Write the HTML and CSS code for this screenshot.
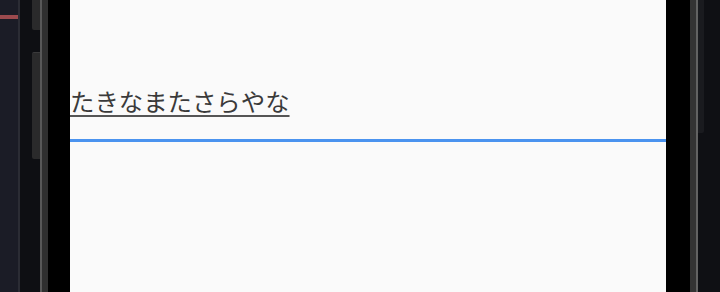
FILE: index.html
```html
<!DOCTYPE html>
<html lang="ja">
<head>
<meta charset="utf-8">
<link rel="stylesheet" href="styles.css">
</head>
<body>
<div class="screen">
  <div class="left">
    <div class="side-panel"><div class="red-mark"></div></div>
    <div class="side-divider"></div>
    <div class="side-gap"></div>
    <div class="scroll-track">
      <div class="scroll-block block-a"></div>
      <div class="scroll-block block-b"></div>
    </div>
    <div class="edge-light"></div>
    <div class="edge-dark"></div>
    <div class="bezel"></div>
  </div>
  <main class="content">
    <p class="label">たきなまたさらやな</p>
    <div class="accent-line"></div>
  </main>
  <div class="right">
    <div class="bezel-r"></div>
    <div class="edge-dark"></div>
    <div class="edge-light"></div>
    <div class="right-panel"><div class="right-block"></div></div>
  </div>
</div>
</body>
</html>
```
FILE: styles.css
```css
html, body {
  margin: 0;
  padding: 0;
  background: #000;
}
.screen {
  display: flex;
  width: 720px;
  height: 292px;
  overflow: hidden;
}
.left, .right {
  display: flex;
  height: 100%;
}
.side-panel {
  width: 18px;
  background: #1b1c26;
  padding-top: 15px;
  box-sizing: border-box;
}
.red-mark {
  height: 4px;
  background: #9c4a4e;
}
.side-divider {
  width: 2px;
  background: #2b2c34;
}
.side-gap {
  width: 12px;
  background: #0e0f13;
}
.scroll-track {
  width: 8px;
  background: #0e0f13;
  display: flex;
  flex-direction: column;
}
.scroll-block {
  background: #2a2a2b;
  border-radius: 0 0 0 2px;
}
.block-a {
  height: 30px;
}
.block-b {
  margin-top: 22px;
  height: 106px;
  border-top: 1px solid #3a3a3b;
  border-radius: 2px 0 0 2px;
}
.edge-light {
  width: 2px;
  background: #585858;
}
.edge-dark {
  width: 6px;
  background: #2f2f2f;
}
.bezel {
  width: 22px;
  background: #000;
}
.content {
  width: 596px;
  background: #fafafa;
  padding-top: 84px;
  box-sizing: border-box;
}
.label {
  margin: 0;
  font-family: "Noto Sans CJK JP", "Noto Sans", sans-serif;
  font-size: 24.4px;
  font-weight: 400;
  line-height: 34px;
  color: #3a3a3a;
  text-decoration: underline;
  text-decoration-color: #555;
  text-decoration-thickness: 1.5px;
  text-underline-offset: 3.5px;
  display: inline-block;
}
.accent-line {
  margin-top: 21px;
  height: 3px;
  background: #4a93ef;
}
.bezel-r {
  width: 24px;
  background: #000;
}
.right .edge-dark {
  width: 6px;
  background: #333;
}
.right .edge-light {
  width: 2px;
  background: #626262;
}
.right-panel {
  width: 22px;
  background: #0f1014;
}
.right-block {
  width: 6px;
  height: 133px;
  background: #1a1b1f;
  border-radius: 0 0 2px 0;
}
```
